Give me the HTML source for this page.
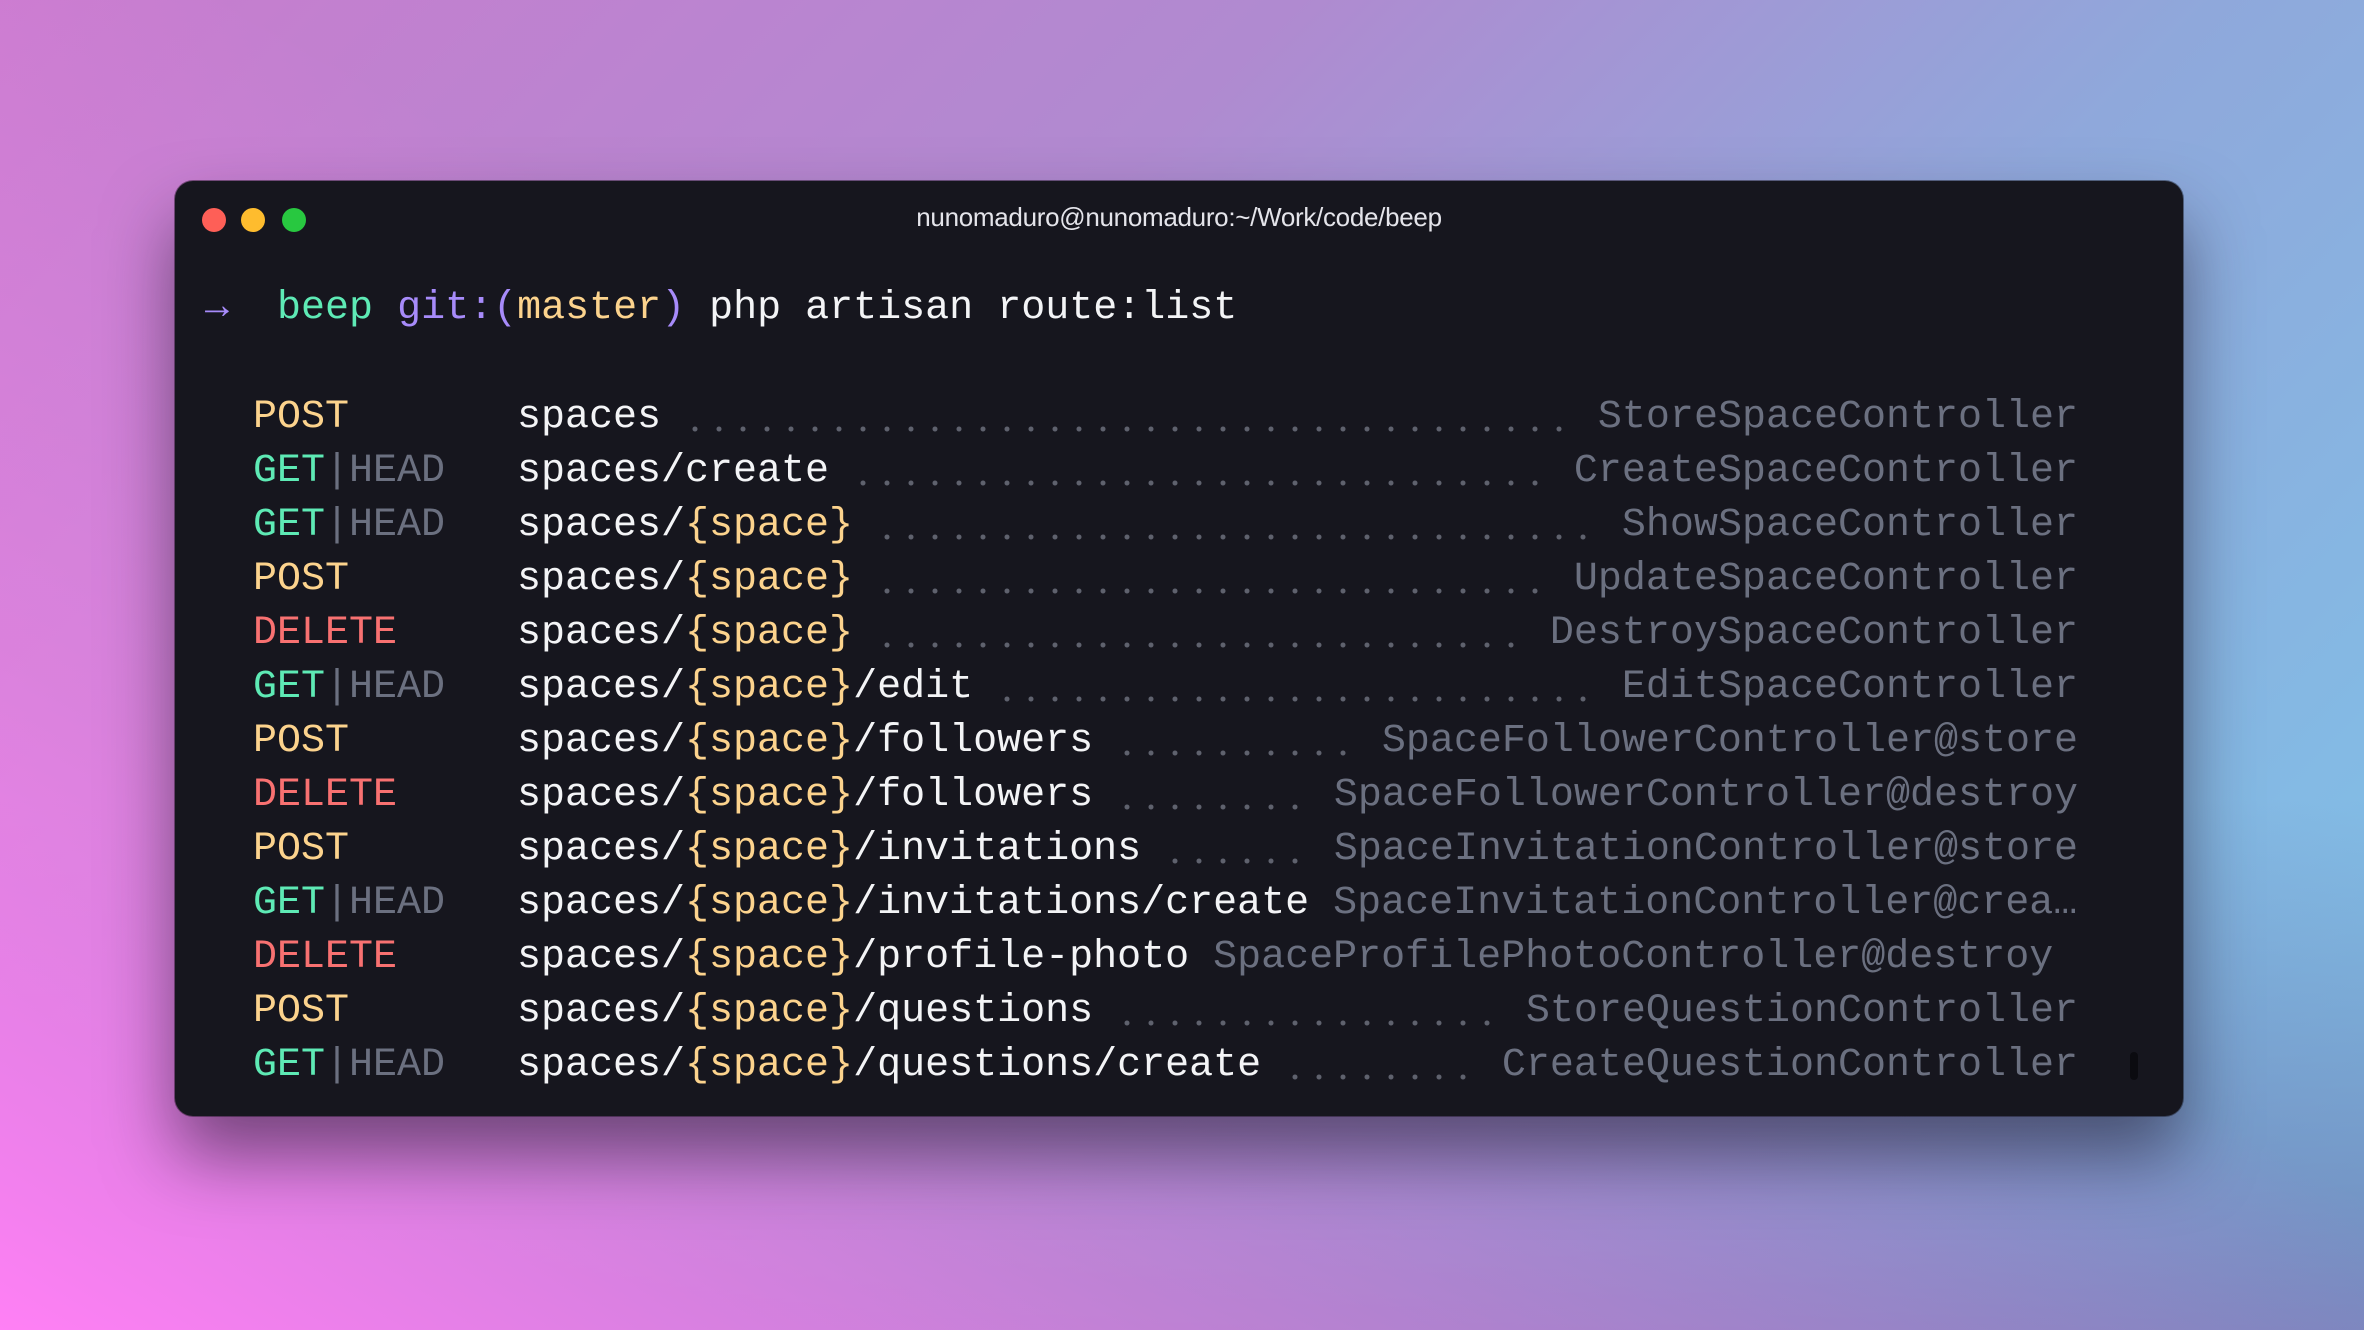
<!DOCTYPE html>
<html><head><meta charset="utf-8"><style>
html,body{margin:0;padding:0}
body{width:2364px;height:1330px;overflow:hidden;position:relative;
background:linear-gradient(135deg,#c97ccf 0%,#b08ad0 35%,#8fa8db 60%,#7cc6ea 100%);}
.bg2{position:absolute;inset:0;background:linear-gradient(to top right,#ff80f5 0%,rgba(240,128,230,.6) 25%,rgba(180,130,200,0) 55%),linear-gradient(to top,rgba(110,120,175,.8) 0%,rgba(110,120,175,0) 40%);}
.win{position:absolute;left:175px;top:181px;width:2008px;height:935px;background:#16161e;border-radius:18px;
box-shadow:0 40px 70px rgba(30,20,40,.55),0 0 0 1px rgba(0,0,0,.4);overflow:hidden}
.dot{position:absolute;top:27px;width:24px;height:24px;border-radius:50%}
.title{position:absolute;top:21px;left:0;right:0;text-align:center;font:26px "Liberation Sans",sans-serif;color:#e4e4ea;letter-spacing:-0.3px}
.mono{font-family:"Liberation Mono",monospace;font-size:40px}
.prompt{position:absolute;left:30px;top:101px;height:54px;line-height:54px;color:#f3f4f6;white-space:pre}
.rows{position:absolute;left:30px;top:210px;width:1873px}
.row{display:flex;height:54px;line-height:54px;color:#f3f4f6;white-space:nowrap}
.m{width:312px;flex:none;white-space:pre}
.fill{flex:1;margin:0 24px 0 22px;height:54px;background-image:radial-gradient(circle,#5f626e 2.2px,transparent 2.8px);background-size:24px 10px;background-repeat:repeat-x;background-position:0 33px}
.c{color:#6b7080}
.g{color:#5eeab5}.y{color:#fcd38d}.r{color:#f87171}.h{color:#6b7080}.p{color:#a78bfa}
.sb{position:absolute;left:1955px;top:871px;width:8px;height:28px;border-radius:4px;background:#0b0b10}
.sp{display:inline-block;width:24px}
</style></head><body><div class="bg2"></div>
<div class="win">
<div class="dot" style="left:27px;background:#fe5f57"></div>
<div class="dot" style="left:66px;background:#febc2e"></div>
<div class="dot" style="left:107px;background:#28c840"></div>
<div class="title">nunomaduro@nunomaduro:~/Work/code/beep</div>
<div class="prompt mono"><span class="p">→</span>  <span class="g">beep</span> <span class="p">git:(</span><span class="y">master</span><span class="p">)</span> php artisan route:list</div>
<div class="rows mono"><div class="row"><span class="m">  <span class="y">POST</span></span><span>spaces</span><span class="fill"></span><span class="c">StoreSpaceController</span></div><div class="row"><span class="m">  <span class="g">GET</span><span class="h">|HEAD</span></span><span>spaces/create</span><span class="fill"></span><span class="c">CreateSpaceController</span></div><div class="row"><span class="m">  <span class="g">GET</span><span class="h">|HEAD</span></span><span>spaces/<span class="y">{space}</span></span><span class="fill"></span><span class="c">ShowSpaceController</span></div><div class="row"><span class="m">  <span class="y">POST</span></span><span>spaces/<span class="y">{space}</span></span><span class="fill"></span><span class="c">UpdateSpaceController</span></div><div class="row"><span class="m">  <span class="r">DELETE</span></span><span>spaces/<span class="y">{space}</span></span><span class="fill"></span><span class="c">DestroySpaceController</span></div><div class="row"><span class="m">  <span class="g">GET</span><span class="h">|HEAD</span></span><span>spaces/<span class="y">{space}</span>/edit</span><span class="fill"></span><span class="c">EditSpaceController</span></div><div class="row"><span class="m">  <span class="y">POST</span></span><span>spaces/<span class="y">{space}</span>/followers</span><span class="fill"></span><span class="c">SpaceFollowerController@store</span></div><div class="row"><span class="m">  <span class="r">DELETE</span></span><span>spaces/<span class="y">{space}</span>/followers</span><span class="fill"></span><span class="c">SpaceFollowerController@destroy</span></div><div class="row"><span class="m">  <span class="y">POST</span></span><span>spaces/<span class="y">{space}</span>/invitations</span><span class="fill"></span><span class="c">SpaceInvitationController@store</span></div><div class="row"><span class="m">  <span class="g">GET</span><span class="h">|HEAD</span></span><span>spaces/<span class="y">{space}</span>/invitations/create</span><span class="sp"></span><span class="c">SpaceInvitationController@crea…</span></div><div class="row"><span class="m">  <span class="r">DELETE</span></span><span>spaces/<span class="y">{space}</span>/profile-photo</span><span class="sp"></span><span class="c">SpaceProfilePhotoController@destroy</span></div><div class="row"><span class="m">  <span class="y">POST</span></span><span>spaces/<span class="y">{space}</span>/questions</span><span class="fill"></span><span class="c">StoreQuestionController</span></div><div class="row"><span class="m">  <span class="g">GET</span><span class="h">|HEAD</span></span><span>spaces/<span class="y">{space}</span>/questions/create</span><span class="fill"></span><span class="c">CreateQuestionController</span></div></div>
<div class="sb"></div>
</div>
</body></html>
